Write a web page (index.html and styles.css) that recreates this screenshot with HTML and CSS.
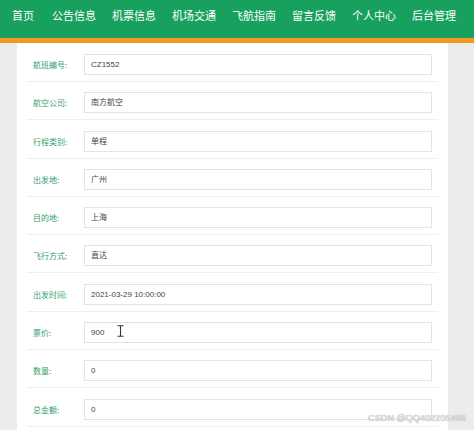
FILE: index.html
```html
<!DOCTYPE html>
<html lang="zh-CN">
<head>
<meta charset="utf-8">
<title>航班信息</title>
<link rel="stylesheet" href="styles.css">
</head>
<body>
<nav class="nav">
  <a class="nav-item first">首页</a>
  <a class="nav-item">公告信息</a>
  <a class="nav-item">机票信息</a>
  <a class="nav-item">机场交通</a>
  <a class="nav-item">飞航指南</a>
  <a class="nav-item">留言反馈</a>
  <a class="nav-item">个人中心</a>
  <a class="nav-item">后台管理</a>
</nav>
<div class="stripe"></div>
<main class="page">
  <section class="panel">
    <div class="row"><label class="label">航班编号:</label><div class="input">CZ1552</div></div>
    <div class="row"><label class="label">航空公司:</label><div class="input">南方航空</div></div>
    <div class="row"><label class="label">行程类别:</label><div class="input">单程</div></div>
    <div class="row"><label class="label">出发地:</label><div class="input">广州</div></div>
    <div class="row"><label class="label">目的地:</label><div class="input">上海</div></div>
    <div class="row"><label class="label">飞行方式:</label><div class="input">直达</div></div>
    <div class="row"><label class="label">出发时间:</label><div class="input">2021-03-29 10:00:00</div></div>
    <div class="row"><label class="label">票价:</label><div class="input">900<svg class="ibeam" width="7" height="12" viewBox="0 0 7 12"><path d="M0.5 0.8h6M3.5 0.8v10.4M0.5 11.2h6" stroke="#333" stroke-width="1.1" fill="none"/></svg></div></div>
    <div class="row"><label class="label">数量:</label><div class="input">0</div></div>
    <div class="row"><label class="label">总金额:</label><div class="input">0</div></div>
  </section>
</main>
<div class="watermark">CSDN @QQ402205496</div>
</body>
</html>
```

FILE: styles.css
```css
html, body {
  margin: 0;
  padding: 0;
}
body {
  background: #ececec;
  font-family: "Noto Sans CJK SC", "Liberation Sans", sans-serif;
  width: 474px;
  height: 430px;
  overflow: hidden;
  position: relative;
}
.nav {
  height: 38px;
  background: #17a05e;
  display: flex;
  gap: 16px;
  padding: 10px 0 0 12px;
  box-sizing: border-box;
}
.nav-item {
  color: #ffffff;
  font-size: 11px;
  line-height: 11px;
  white-space: nowrap;
}
.nav-item.first {
  margin-right: 2px;
}
.stripe {
  height: 5px;
  background: #f39a1e;
}
.page {
  padding: 0 26px 0 17px;
}
.panel {
  background: #ffffff;
  padding: 0 10px;
  height: 387px;
}
.row {
  display: flex;
  align-items: center;
  padding: 10.3px 6px 6px 6px;
  border-bottom: 1px solid #efefef;
}
.row:first-child {
  padding-top: 11px;
}
.label {
  width: 51px;
  flex: none;
  font-size: 8px;
  color: #33a070;
  white-space: nowrap;
}
.input {
  flex: 1;
  height: 21px;
  box-sizing: border-box;
  border: 1px solid #e3e3e3;
  background: #fff;
  padding-left: 6px;
  font-family: "Liberation Sans", "Noto Sans CJK SC", sans-serif;
  font-size: 8px;
  line-height: 19px;
  color: #444;
  position: relative;
}
.ibeam {
  position: absolute;
  left: 32px;
  top: 2px;
}
.watermark {
  position: absolute;
  right: 8px;
  bottom: 7px;
  font-family: "Liberation Sans", sans-serif;
  font-size: 9px;
  color: #e4e4e4;
  text-shadow: 0 0 1px #8a8a8a;
  letter-spacing: 0.1px;
}
```
